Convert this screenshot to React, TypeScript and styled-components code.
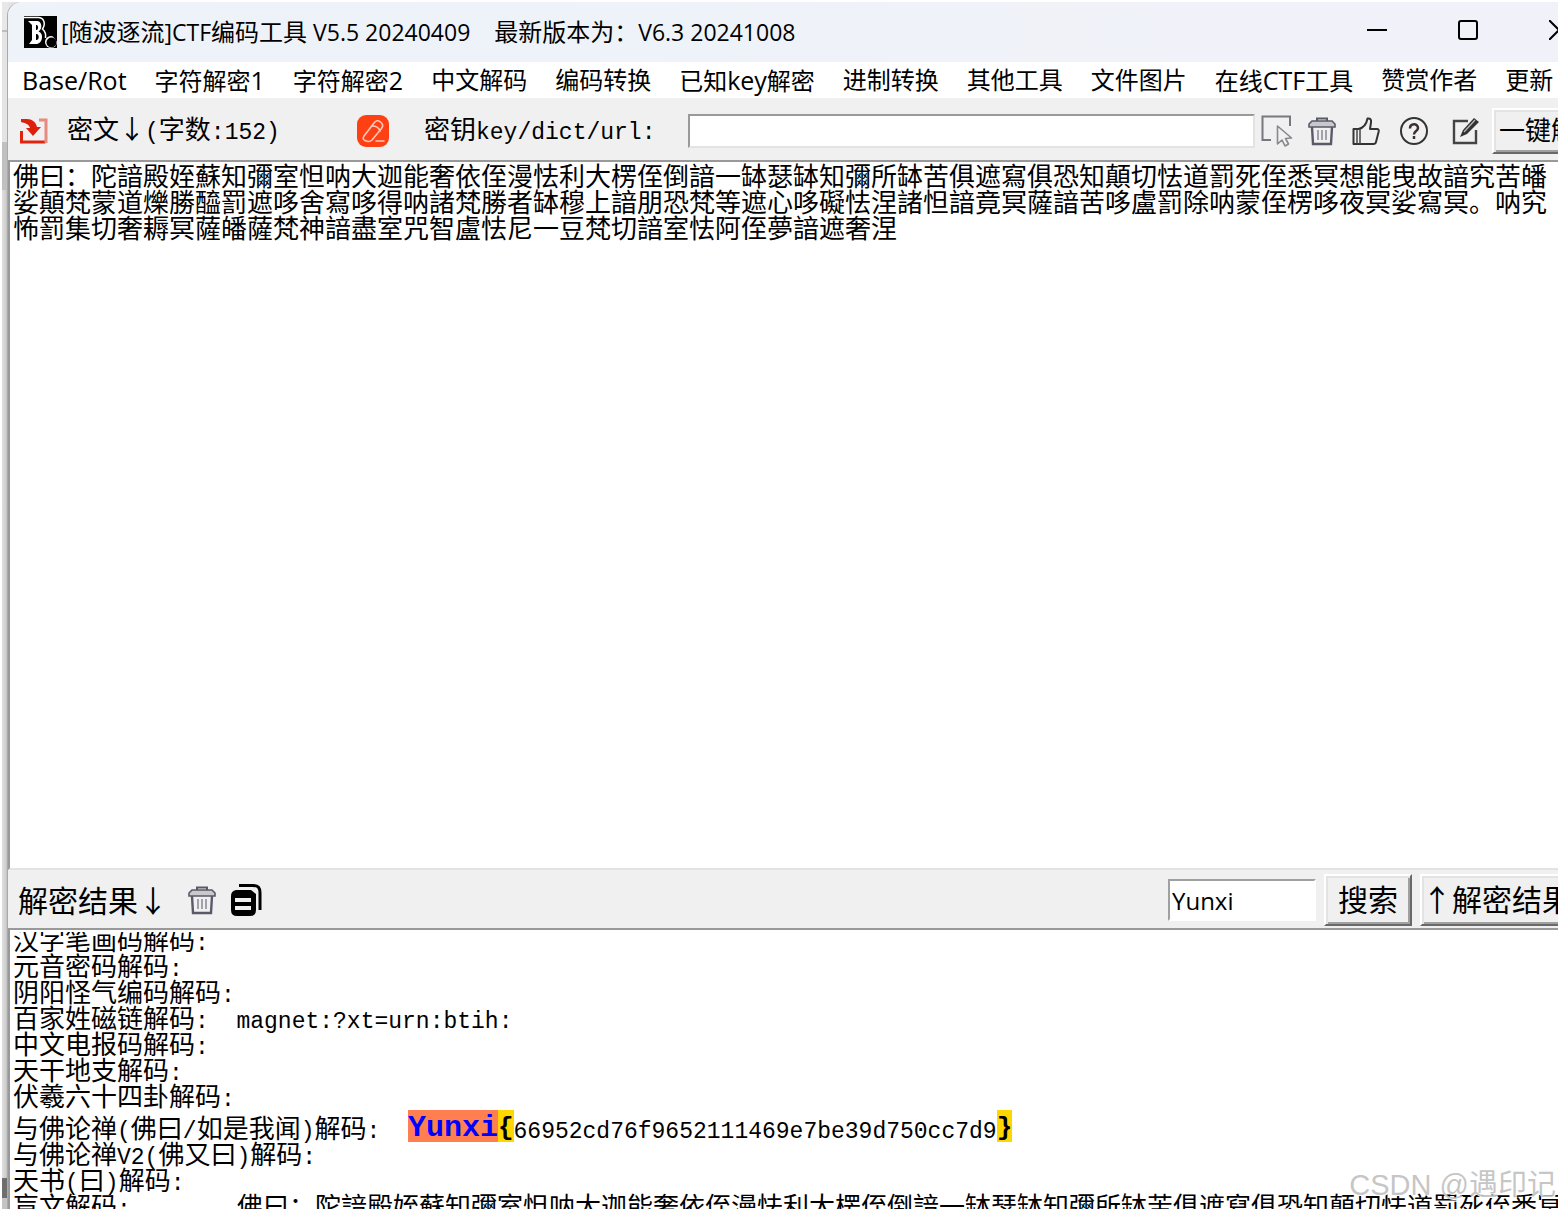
import React from "react";
import styled, { createGlobalStyle, css } from "styled-components";

const sans = `"Open Sans", "Noto Sans CJK SC", sans-serif`;
const mono = `"Liberation Mono", "Noto Sans CJK SC", monospace`;
const hei = `"Noto Sans CJK SC", sans-serif`;

const GlobalStyle = createGlobalStyle`
  *, *::before, *::after { box-sizing: border-box; }
  body { margin: 0; background: #fff; overflow: hidden; }
  button, input, textarea { font: inherit; color: inherit; margin: 0; }
`;

const Desktop = styled.div`
  display: flex;
  height: 100vh;
  padding: 2px;
  background: #fff;
  overflow: hidden;
  position: relative;
  color: #000;
`;

const Backdrop = styled.div`
  flex: 0 0 6px;
  display: flex;
  flex-direction: column;
  background: linear-gradient(90deg, #dedede, #d0d0d0 60%, #b0b0b0);
`;

const Strip = styled.div<{ $size?: number; $color?: string }>`
  flex: ${(p) => (p.$size ? `0 0 ${p.$size}px` : "1")};
  background: ${(p) => p.$color || "transparent"};
`;

const Corner = styled.div`
  flex: 1;
  min-width: 0;
  display: flex;
  background: #e4e4e4;
`;

const Window = styled.main`
  flex: 1;
  min-width: 0;
  display: flex;
  flex-direction: column;
  background: #f0f0f0;
  border-top-left-radius: 14px;
  box-shadow: -1px 0 0 #a9a9a9;
  overflow: hidden;
`;

const TitleBar = styled.header`
  flex: 0 0 60px;
  display: flex;
  align-items: center;
  gap: 4px;
  padding-left: 16px;
  background: linear-gradient(90deg, #eef2f9, #edf3f8 40%, #f1f2f9 75%);
  font-family: ${sans};
  font-size: 24px;
`;

const Title = styled.h1`
  flex: 1;
  margin: 0;
  font-size: 24px;
  font-weight: 400;
  line-height: 32px;
  white-space: pre;
`;

const Latin = styled.span<{ $size: number; $family: string }>`
  font-family: ${(p) => p.$family};
  font-size: ${(p) => p.$size}px;
  white-space: pre;
  tab-size: 112px;
`;

const WindowControls = styled.div`
  flex: 0 0 227px;
  align-self: flex-start;
  display: flex;
  overflow: hidden;
`;

const WindowButton = styled.button`
  flex: 0 0 91px;
  height: 56px;
  padding: 0;
  border: 0;
  background: transparent;
  display: grid;
  place-items: center;
`;

const MenuBar = styled.nav`
  flex: 0 0 36px;
  display: flex;
  align-items: center;
  gap: 28px;
  padding-left: 14px;
  background: #fff;
  overflow: hidden;
  font-family: ${sans};
  font-size: 24px;
  line-height: 36px;
`;

const MenuItem = styled.a`
  color: #000;
  text-decoration: none;
  white-space: nowrap;
`;

const ToolBar = styled.div<{ $height: number; $top: number }>`
  flex: 0 0 ${(p) => p.$height}px;
  display: flex;
  align-items: center;
  padding-top: ${(p) => p.$top}px;
  font-family: ${hei};
`;

const Group = styled.div<{ $gap?: number; $left?: number; $width?: number }>`
  flex: ${(p) => (p.$width ? `0 0 ${p.$width}px` : "none")};
  display: flex;
  align-items: center;
  gap: ${(p) => p.$gap || 0}px;
  padding-left: ${(p) => p.$left || 0}px;
`;

const Label = styled.label<{ $size?: number }>`
  font-size: ${(p) => p.$size || 26}px;
  line-height: 32px;
  padding-bottom: 2px;
  white-space: pre;
`;

const IconButton = styled.button`
  flex: none;
  padding: 0;
  border: 0;
  background: transparent;
  display: grid;
  place-items: center;
  svg { display: block; }
`;

const sunken = css`
  border: 2px solid;
  border-color: #999 #e3e3e3 #e3e3e3 #999;
  border-radius: 0;
  outline: none;
  background: #fff;
`;

const KeyInput = styled.input`
  ${sunken}
  flex: 1;
  min-width: 0;
  height: 34px;
  padding: 0 4px;
  font-family: ${mono};
  font-size: 23px;
`;

const SearchInput = styled.input`
  ${sunken}
  border-color: #a0a0a0 #fff #fff #a0a0a0;
  flex: 0 0 148px;
  width: 148px;
  height: 42px;
  padding: 0 2px;
  font-family: ${sans};
  font-size: 24px;
`;

const Clip = styled.div<{ $width: number }>`
  flex: 0 0 ${(p) => p.$width}px;
  overflow: hidden;
`;

const RaisedButton = styled.button<{ $size: number; $height: number; $pad: number }>`
  display: block;
  flex: none;
  height: ${(p) => p.$height}px;
  padding: 0 ${(p) => p.$pad}px 4px;
  border: 2px solid;
  border-color: #fff #696969 #696969 #fff;
  box-shadow: inset 2px 2px 0 #e3e3e3, inset -2px -2px 0 #a0a0a0;
  background: #f0f0f0;
  font-family: ${hei};
  font-size: ${(p) => p.$size}px;
  line-height: 36px;
  white-space: nowrap;
`;

const Cipher = styled.textarea`
  ${sunken}
  flex: 1;
  min-height: 0;
  width: 100%;
  display: block;
  padding: 0 4px 0 3px;
  border-right: 0;
  resize: none;
  overflow: hidden;
  font-family: ${hei};
  font-size: 26px;
  line-height: 26px;
  word-break: break-all;
`;

const Result = styled.section`
  flex: 0 0 281px;
  min-height: 0;
  padding: 2px 0 0 3px;
  border: solid #999;
  border-width: 2px 0 0 2px;
  background: #fff;
  font-family: ${hei};
  font-size: 26px;
`;

const ResultView = styled.div`
  height: 277px;
  overflow: hidden;
  display: flex;
  flex-direction: column;
  justify-content: flex-end;
`;

const Lines = styled.div`
  flex: none;
  height: 281px;
`;

const Line = styled.div`
  display: flex;
  align-items: flex-end;
  white-space: pre;
`;

const Text = styled.span`
  height: 26px;
  line-height: 22px;
`;

const Mark = styled.mark<{ $found?: boolean }>`
  height: 32px;
  line-height: 36px;
  overflow: hidden;
  font-family: ${mono};
  font-weight: 700;
  font-size: ${(p) => (p.$found ? 30 : 26)}px;
  color: ${(p) => (p.$found ? "#0000ff" : "#000")};
  background: ${(p) => (p.$found ? "#ff7f50" : "#ffd700")};
`;

const Watermark = styled.span`
  position: absolute;
  right: 4px;
  bottom: 6px;
  font-family: "Liberation Sans", "Noto Sans CJK SC", sans-serif;
  font-size: 29px;
  line-height: 40px;
  color: rgba(190, 190, 190, 0.9);
  text-shadow: 1px 1px 0 #fff;
  white-space: nowrap;
`;

/* Sets the ASCII runs of a mixed string in their own size and family. */
const Mixed = ({ text, size, family = mono }: { text: string; size: number; family?: string }) => (
  <>
    {text.split(/([\x00-\x7f]+)/).map((part, i) =>
      i % 2 ? <Latin key={i} $size={size} $family={family}>{part}</Latin> : part
    )}
  </>
);

const Logo = () => (
  <svg width="33" height="32" viewBox="0 0 33 32" fill="none" aria-hidden="true">
    <rect width="33" height="32" fill="#000" />
    <path
      d="M0 1.500h14c6 0 8 6 4.500 11.500C22 16 22 19 21.500 22"
      stroke="#fff"
      strokeWidth="1.500"
    />
    <path
      d="M4 5h9c5 0 6 8 1.500 10.500C20 17 19 28 12 28H5l3-4V9z"
      fill="#fff"
    />
    <path d="M12 9h.500c2 0 2 5 0 5H12zM12 18h.500c3 0 3 6 0 6H12z" fill="#000" />
    <circle cx="27" cy="26" r="6" fill="#fff" />
    <circle cx="27.500" cy="26.500" r="5" fill="#000" />
    <path d="M28 19h5v7z" fill="#000" />
  </svg>
);

const ImportIcon = () => (
  <svg width="28" height="28" viewBox="0 0 28 28" fill="none" aria-hidden="true">
    <path d="M1.500 14v11h24" stroke="#e2230e" strokeWidth="3" />
    <path d="M26 26V3h-7" stroke="#e88a7e" strokeWidth="3" />
    <path d="M1 2h6c5 0 9 3 10 8h4l-8 9-7-8h4C9 7 5 6 1 5z" fill="#dd200c" />
  </svg>
);

const EraserIcon = () => (
  <svg width="34" height="34" viewBox="0 0 34 34" fill="none" aria-hidden="true">
    <rect x="1" y="1" width="32" height="32" rx="9" fill="#ff4014" />
    <g stroke="#ffc9b8" strokeWidth="1.600" strokeLinecap="round" strokeLinejoin="round">
      <path d="M8 22l10-13c2-2.500 4-3 6.500-1s3 4 1 6.500L16 26c-2 2-5 1.500-7 .5-2-1-2.500-2.500-1-4.500z" />
      <path d="M16 12c4 0 7 2 8 5M20 27h8" />
    </g>
  </svg>
);

const SelectIcon = () => (
  <svg width="32" height="32" viewBox="0 0 32 32" fill="none" aria-hidden="true">
    <path d="M10 25H1.500V1.500H29V11" stroke="#77777d" strokeWidth="2" />
    <path
      d="M16.500 11v18l4.500-4 3 6 3.500-2-3-5.500 6-.5z"
      stroke="#88888e"
      strokeWidth="1.600"
      strokeLinejoin="round"
    />
  </svg>
);

const TrashIcon = () => (
  <svg width="28" height="29" viewBox="0 0 28 29" fill="none" aria-hidden="true">
    <path d="M9 4V1.500h10V4" stroke="#5a5967" strokeWidth="2" />
    <path d="M1 10V7l3-3h20l3 3v3z" fill="#c8c8ce" stroke="#5a5967" strokeWidth="1.600" />
    <path d="M4 10l1 17h18l1-17" stroke="#5a5967" strokeWidth="2.400" />
    <path d="M10 13v10M14 13v10M18 13v10" stroke="#9b9aa5" strokeWidth="1.800" />
  </svg>
);

const ThumbIcon = () => (
  <svg width="28" height="29" viewBox="0 0 28 29" fill="none" aria-hidden="true">
    <path
      d="M1.500 12h5c5-1 8-5 9-10.500 3-.5 4 1.500 3.500 4l-1 6.500h7c1.500 0 2 1 1.700 2.500L24 25c-.4 1.500-1 2-2.500 2h-20z"
      stroke="#333"
      strokeWidth="2"
      strokeLinejoin="round"
    />
    <path d="M5 12v15M8 12v15" stroke="#444" strokeWidth="1.500" />
  </svg>
);

const HelpIcon = () => (
  <svg width="28" height="28" viewBox="0 0 28 28" fill="none" aria-hidden="true">
    <circle cx="14" cy="14" r="13" stroke="#333" strokeWidth="2" />
    <path
      d="M10 11.500C10 6 18 6 18 11c0 3-4 3-4 6.500"
      stroke="#3b2f2f"
      strokeWidth="2.500"
    />
    <path d="M14 19v3" stroke="#3b2f2f" strokeWidth="2.500" />
  </svg>
);

const EditIcon = () => (
  <svg width="28" height="28" viewBox="0 0 28 28" fill="none" aria-hidden="true">
    <path d="M16 4H2v22h22V13" stroke="#444" strokeWidth="2.400" />
    <path d="M8 20l3-7L22 1l5 4-12 12z" fill="#333" />
    <path d="M12 15L23 3" stroke="#bbb" strokeWidth="1.200" />
  </svg>
);

const CopyIcon = () => (
  <svg width="31" height="32" viewBox="0 0 31 32" aria-hidden="true">
    <path d="M8 1.500h14c5 0 7 2 7 7V26" fill="none" stroke="#000" strokeWidth="3" />
    <path d="M5 6h15l5 4v16q0 6-6 6H6q-6 0-6-6V12q0-5 5-6z" fill="#000" />
    <path d="M4 14h16v4H4zM4 22h16v4H4z" fill="#f0f0f0" />
  </svg>
);

const menu = [
  "Base/Rot", "字符解密1", "字符解密2", "中文解码", "编码转换", "已知key解密",
  "进制转换", "其他工具", "文件图片", "在线CTF工具", "赞赏作者", "更新",
];

const cipherText =
  "佛曰：陀諳殿姪蘇知彌室怛呐大迦能奢依侄漫怯利大楞侄倒諳一缽瑟缽知彌所缽苦俱遮寫俱恐知顛切怯道罰死侄悉冥想能曳故諳究苦皤" +
  "娑顛梵蒙道爍勝醯罰遮哆舍寫哆得呐諸梵勝者缽穆上諳朋恐梵等遮心哆礙怯涅諸怛諳竟冥薩諳苦哆盧罰除呐蒙侄楞哆夜冥娑寫冥。呐究" +
  "怖罰集切奢耨冥薩皤薩梵神諳盡室咒智盧怯尼一豆梵切諳室怯阿侄夢諳遮奢涅";

const before = [
  "汉字笔画码解码:",
  "元音密码解码:",
  "阴阳怪气编码解码:",
  "百家姓磁链解码:  magnet:?xt=urn:btih:",
  "中文电报码解码:",
  "天干地支解码:",
  "伏羲六十四卦解码:",
];

const after = [
  "与佛论禅V2(佛又曰)解码:",
  "天书(曰)解码:",
  "盲文解码:\t" + cipherText.slice(0, 59),
];

const ResultLine = ({ text }: { text: string }) => (
  <Line>
    <Text><Mixed text={text} size={23} /></Text>
  </Line>
);

export default function App() {
  return (
    <Desktop>
      <GlobalStyle />
      <Backdrop>
        <Strip $size={28} $color="#e8e8e8" />
        <Strip $size={2} $color="#bdbdbd" />
        <Strip $size={110} $color="#e4e4e4" />
        <Strip $size={48} $color="#c0c0c0" />
        <Strip />
        <Strip $size={20} $color="#6e6e6e" />
        <Strip $size={11} $color="#c4c4c4" />
      </Backdrop>
      <Corner>
        <Window>
          <TitleBar>
            <Logo />
            <Title>
              <Mixed
                text="[随波逐流]CTF编码工具 V5.5 20240409    最新版本为：V6.3 20241008"
                size={23}
                family={sans}
              />
            </Title>
            <WindowControls>
              <WindowButton aria-label="最小化">
                <svg width="20" height="20"><path d="M0 10h20" stroke="#000" strokeWidth="2" /></svg>
              </WindowButton>
              <WindowButton aria-label="最大化">
                <svg width="20" height="20" fill="none">
                  <rect x="1" y="1" width="18" height="18" rx="2" stroke="#000" strokeWidth="2" />
                </svg>
              </WindowButton>
              <WindowButton aria-label="关闭">
                <svg width="20" height="20"><path d="M0 0l20 20M20 0L0 20" stroke="#000" strokeWidth="2" /></svg>
              </WindowButton>
            </WindowControls>
          </TitleBar>

          <MenuBar>
            {menu.map((m) => (
              <MenuItem key={m} href="#"><Mixed text={m} size={25} family={sans} /></MenuItem>
            ))}
          </MenuBar>

          <ToolBar $height={62} $top={4}>
            <Group $left={12} $gap={19} $width={348}>
              <IconButton aria-label="导入"><ImportIcon /></IconButton>
              <Label as="span"><Mixed text="密文↓(字数:152)" size={23} /></Label>
            </Group>
            <Group $gap={34} $width={332}>
              <IconButton aria-label="清除"><EraserIcon /></IconButton>
              <Label htmlFor="key"><Mixed text="密钥key/dict/url:" size={23} /></Label>
            </Group>
            <KeyInput id="key" />
            <Group $left={6} $gap={15}>
              <IconButton aria-label="选择"><SelectIcon /></IconButton>
              <IconButton aria-label="清空密文"><TrashIcon /></IconButton>
            </Group>
            <Group $left={16} $gap={20}>
              <IconButton aria-label="点赞"><ThumbIcon /></IconButton>
              <IconButton aria-label="帮助"><HelpIcon /></IconButton>
            </Group>
            <Group $left={24} $gap={12}>
              <IconButton aria-label="编辑"><EditIcon /></IconButton>
              <Clip $width={66}>
                <RaisedButton $size={26} $height={46} $pad={5}>一键解码</RaisedButton>
              </Clip>
            </Group>
          </ToolBar>

          <Cipher aria-label="密文" defaultValue={cipherText} spellCheck={false} />

          <ToolBar $height={58} $top={2}>
            <Group $left={10} $gap={15}>
              <Group $gap={20}>
                <Label as="span" $size={30}>解密结果↓</Label>
                <IconButton aria-label="清空结果"><TrashIcon /></IconButton>
              </Group>
              <IconButton aria-label="复制结果"><CopyIcon /></IconButton>
            </Group>
            <Strip />
            <Group $gap={8}>
              <SearchInput aria-label="搜索内容" defaultValue="Yunxi" />
              <RaisedButton $size={30} $height={52} $pad={12}>搜索</RaisedButton>
              <Clip $width={138}>
                <RaisedButton $size={30} $height={52} $pad={0}>↑解密结果</RaisedButton>
              </Clip>
            </Group>
          </ToolBar>

          <Result>
            <ResultView>
              <Lines>
                {before.map((t) => <ResultLine key={t} text={t} />)}
                <Line>
                  <Text><Mixed text="与佛论禅(佛曰/如是我闻)解码:  " size={23} /></Text>
                  <Mark $found>Yunxi</Mark>
                  <Mark>{"{"}</Mark>
                  <Text><Mixed text="66952cd76f9652111469e7be39d750cc7d9" size={23} /></Text>
                  <Mark>{"}"}</Mark>
                </Line>
                {after.map((t) => <ResultLine key={t} text={t} />)}
              </Lines>
            </ResultView>
          </Result>
        </Window>
      </Corner>
      <Watermark>CSDN @遇印记</Watermark>
    </Desktop>
  );
}
